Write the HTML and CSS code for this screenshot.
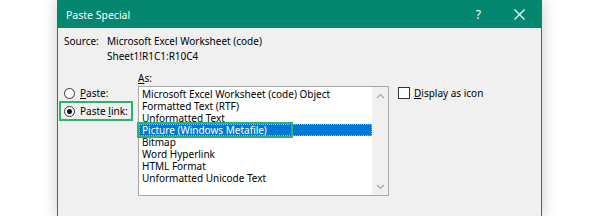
FILE: index.html
```html
<!DOCTYPE html>
<html>
<head>
<meta charset="utf-8">
<link rel="stylesheet" href="styles.css">
</head>
<body>
<div class="dialog">
  <div class="titlebar">
    <span class="title">Paste Special</span>
    <span class="help">?</span>
    <span class="close"><svg width="11" height="11" viewBox="0 0 11 11"><path d="M0.5 0.5L10.5 10.5M10.5 0.5L0.5 10.5" stroke="#fff" stroke-width="1.1" fill="none"/></svg></span>
  </div>
  <div class="content">
    <div class="source">
      <span class="src-label">Source:</span>
      <div class="src-value">
        <div>Microsoft Excel Worksheet (code)</div>
        <div>Sheet1!R1C1:R10C4</div>
      </div>
    </div>
    <div class="main">
      <div class="options">
        <div class="radio-row"><span class="radio"></span><span><u>P</u>aste:</span></div>
        <div class="radio-row marked"><span class="radio checked"></span><span>Paste <u>l</u>ink:</span></div>
      </div>
      <div class="as-col">
        <div class="as-label"><u>A</u>s:</div>
        <div class="listbox">
          <ul class="items">
            <li>Microsoft Excel Worksheet (code) Object</li>
            <li>Formatted Text (RTF)</li>
            <li>Unformatted Text</li>
            <li class="selected">Picture (Windows Metafile)<span class="mark"></span></li>
            <li>Bitmap</li>
            <li>Word Hyperlink</li>
            <li>HTML Format</li>
            <li>Unformatted Unicode Text</li>
          </ul>
          <div class="scrollbar">
            <svg width="9" height="6" viewBox="0 0 9 6"><path d="M1 5L4.5 1.5L8 5" stroke="#a6a6a6" stroke-width="1.2" fill="none"/></svg>
            <svg width="9" height="6" viewBox="0 0 9 6"><path d="M1 1L4.5 4.5L8 1" stroke="#a6a6a6" stroke-width="1.2" fill="none"/></svg>
          </div>
        </div>
      </div>
      <div class="display">
        <span class="checkbox"></span><span><u>D</u>isplay as icon</span>
      </div>
    </div>
  </div>
</div>
</body>
</html>
```
FILE: styles.css
```css
html, body {
  margin: 0;
  padding: 0;
  background: #ffffff;
}
body {
  width: 600px;
  height: 216px;
  overflow: hidden;
  font-family: "Noto Sans", "Open Sans", sans-serif;
  font-size: 10px;
  color: #000000;
}
u {
  text-decoration: underline;
  text-underline-offset: 1px;
}
.dialog {
  margin-left: 57px;
  width: 485px;
  height: 216px;
  box-shadow: 0 0 14px rgba(0, 0, 0, 0.22);
  background: #f0f0f0;
  display: flex;
  flex-direction: column;
}
.titlebar {
  height: 28px;
  background: #05876f;
  color: #ffffff;
  display: flex;
  align-items: center;
  padding-left: 9px;
  font-size: 10.5px;
}
.title {
  flex: 1;
  padding-top: 1px;
}
.help {
  font-size: 12px;
  margin-right: 33px;
}
.close {
  display: flex;
  margin-right: 17px;
}
.content {
  flex: 1;
  border-left: 1px solid #05876f;
  border-right: 1px solid #05876f;
  padding-left: 6px;
}
.source {
  display: flex;
  margin-top: 6px;
  line-height: 15px;
}
.src-label {
  width: 43px;
}
.main {
  display: flex;
  margin-top: 7px;
}
.options {
  width: 74px;
  padding-top: 13px;
  box-sizing: border-box;
}
.radio-row {
  height: 18px;
  display: flex;
  align-items: center;
  position: relative;
}
.radio-row.marked::after {
  content: "";
  position: absolute;
  left: -5px;
  top: -1px;
  width: 70px;
  height: 16px;
  border: 2px solid #2db36a;
}
.radio {
  width: 9px;
  height: 9px;
  border: 1px solid #333;
  border-radius: 50%;
  background: #fff;
  margin-right: 5px;
  position: relative;
}
.radio.checked::after {
  content: "";
  position: absolute;
  left: 2px;
  top: 2px;
  width: 5px;
  height: 5px;
  border-radius: 50%;
  background: #111;
}
.as-col {
  width: 251px;
}
.as-label {
  line-height: 15px;
}
.listbox {
  height: 110px;
  border: 1px solid #a8a8a8;
  box-sizing: border-box;
  display: flex;
  background: #ffffff;
}
.items {
  list-style: none;
  margin: 0;
  padding: 1px 0 0 0;
  flex: 1;
}
.items li {
  height: 12px;
  line-height: 12px;
  padding-left: 3px;
  white-space: nowrap;
  position: relative;
}
.items li.selected {
  background: #0078d7;
  color: #ffffff;
  outline: 1px dotted #e7a760;
  outline-offset: -1px;
}
.mark {
  position: absolute;
  left: -2px;
  top: -2px;
  width: 152px;
  height: 12px;
  border: 2px solid #2db36a;
}
.scrollbar {
  width: 16px;
  background: #f0f0f0;
  display: flex;
  flex-direction: column;
  justify-content: space-between;
  align-items: center;
  padding: 6px 0 5px;
}
.display {
  display: flex;
  align-items: center;
  height: 14px;
  margin-top: 15px;
  margin-left: 9px;
}
.checkbox {
  width: 10px;
  height: 10px;
  border: 1px solid #333;
  background: #fff;
  margin-right: 4px;
}
```
